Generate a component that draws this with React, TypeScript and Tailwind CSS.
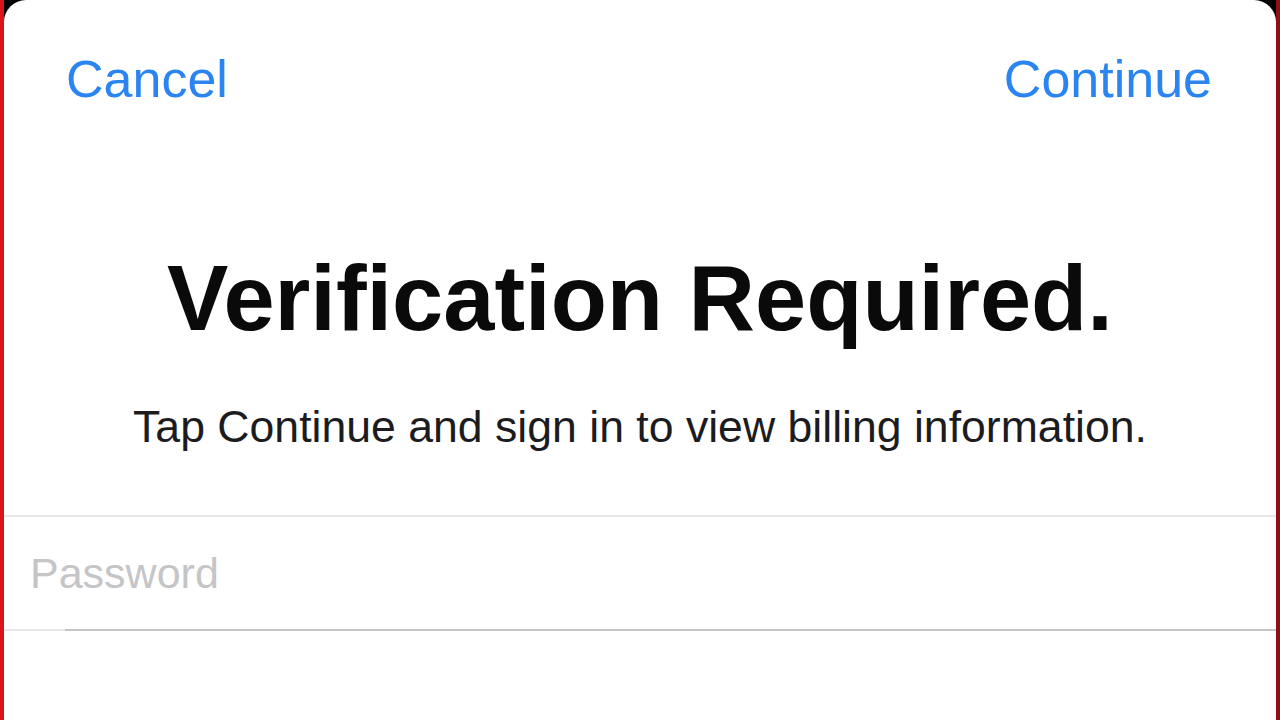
export default function App() {
  return (
    <div className="flex h-[720px] w-[1280px] overflow-hidden bg-black" style={{ fontFamily: '"Liberation Sans", Arial, sans-serif' }}>
      {/* screen frame edges */}
      <div className="w-[4px] shrink-0 bg-[#d9141b]" />

      <div className="flex flex-1 flex-col rounded-t-[22px] bg-white">
        {/* nav bar */}
        <div className="flex items-center justify-between pl-[62px] pr-[64px] pt-[53px]">
          <button className="text-[52px] leading-[52px] text-[#2a84f2]">Cancel</button>
          <button className="text-[52px] leading-[52px] text-[#2a84f2]">Continue</button>
        </div>

        <h1 className="mt-[147px] text-center text-[92px] font-bold leading-[92px] text-[#0a0a0a]">
          Verification Required.
        </h1>
        <p className="mt-[61px] text-center text-[44.6px] leading-[44px] text-[#1c1c1e]">
          Tap Continue and sign in to view billing information.
        </p>

        {/* password field */}
        <div className="mt-[66px] h-[2px] bg-[#e8e8ec]" />
        <div className="flex h-[112px] items-center pl-[26px]">
          <input
            type="password"
            placeholder="Password"
            className="w-full bg-transparent text-[43px] leading-[43px] text-[#1c1c1e] placeholder-[#c5c5c8] outline-none"
          />
        </div>
        <div className="flex h-[2px]">
          <div className="w-[61px] bg-[#e8e8ec]" />
          <div className="flex-1 bg-[#c6c6c9]" />
        </div>
      </div>

      <div className="w-[4px] shrink-0 bg-[#8e1012]" />
    </div>
  );
}
